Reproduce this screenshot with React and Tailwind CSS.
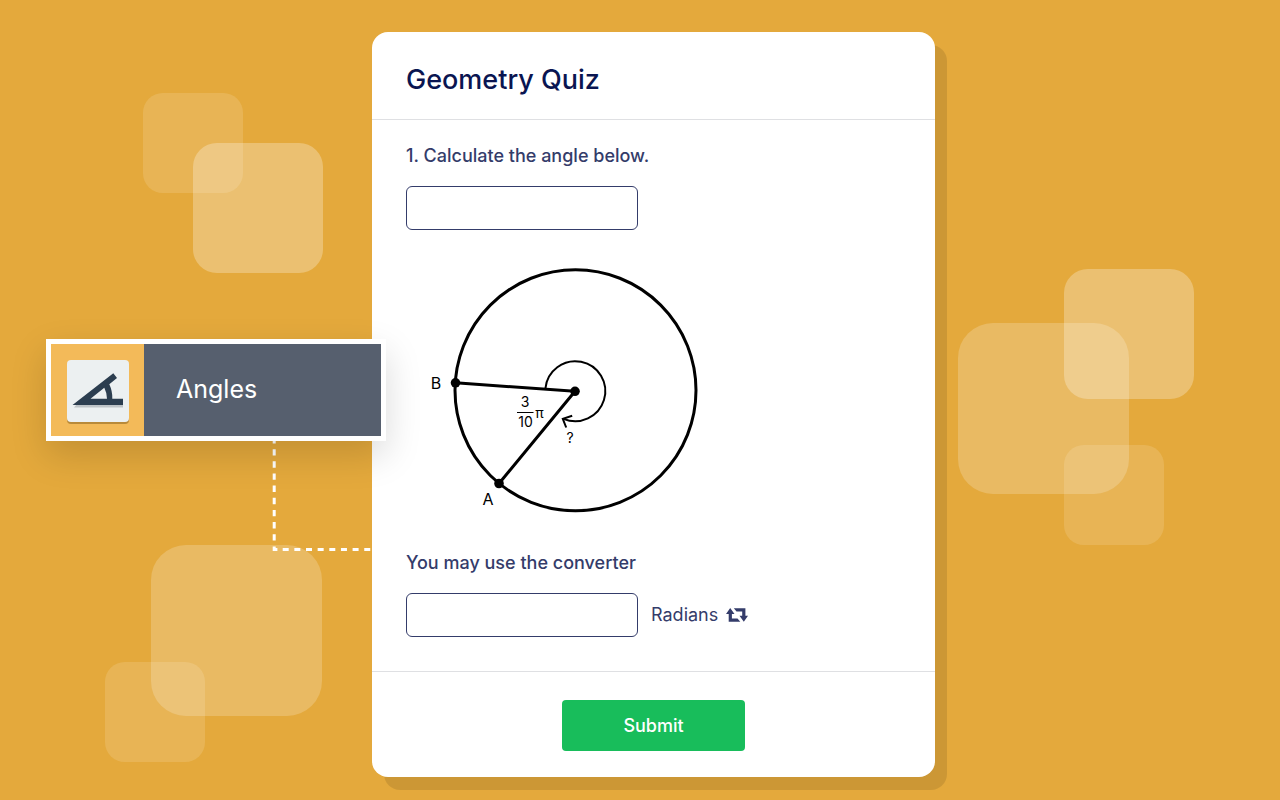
import React from "react";

const shapes = [
  "-left-[229px] top-[61px] size-[100px] rounded-[20px] bg-white/13",
  "-left-[179px] top-[111px] size-[130px] rounded-3xl bg-white/27",
  "-left-[221px] top-[513px] size-[171px] rounded-[35px] bg-white/20",
  "-left-[267px] top-[630px] size-[100px] rounded-[20px] bg-white/13",
  "left-[586px] top-[291px] size-[171px] rounded-[35px] bg-white/20",
  "left-[692px] top-[237px] size-[130px] rounded-3xl bg-white/27",
  "left-[692px] top-[413px] size-[100px] rounded-[20px] bg-white/13",
];

const Backdrop = () => (
  <div aria-hidden="true">
    {shapes.map((shape) => (
      <div key={shape} className={`absolute ${shape}`} />
    ))}
  </div>
);

// Dashed line running from the widget label down to the form
const Connector = () => (
  <svg
    className="absolute -left-[101px] top-[405px]"
    width="101"
    height="116"
    viewBox="271 437 101 116"
    fill="none"
    stroke="#fff"
    strokeWidth="3"
    aria-hidden="true"
  >
    <path d="M274.2 437V545" strokeDasharray="6.4 5.75" />
    <path d="M274.2 546.5V549.6H277.4" />
    <path d="M282.7 549.6H371" strokeDasharray="6 5.65" />
  </svg>
);

const AngleIcon = () => (
  <svg width="62" height="64" viewBox="0 0 62 64" aria-hidden="true">
    <rect y="2" width="62" height="62" rx="4" fill="#b98a3a" />
    <rect width="62" height="62" rx="4" fill="#ecf0f1" />
    <path d="M7 47.500H56V44H10Z" fill="#bdc3c7" />
    <path
      d="M5.500 45L46.300 13.300L50 18L42.300 24.300Q45.500 31 45.300 38.700H56V45ZM37.300 27.700L23.500 38.700H40Q40 33 37.300 27.700Z"
      fill="#2c3e50"
      fillRule="evenodd"
    />
  </svg>
);

const WidgetLabel = () => (
  <div className="absolute -left-[326px] top-[307px] flex h-[102px] w-[340px] border-5 border-white bg-[#565f6e] shadow-[0_14px_36px_rgba(0,0,0,0.15)]">
    <div className="flex w-[93px] items-start justify-center bg-[#f3ba59] pt-4">
      <AngleIcon />
    </div>
    <div className="flex items-center pl-8 text-[25px] text-white">Angles</div>
  </div>
);

const CircleDiagram = () => (
  <svg
    width="300"
    height="260"
    viewBox="420 260 300 260"
    className="mt-[30px] mb-[31px] ml-[14px]"
    role="img"
    aria-label="Circle with points A and B"
  >
    <g fill="none" stroke="#000">
      <circle cx="575.5" cy="390.3" r="120.5" strokeWidth="3" />
      <path d="M455.500 382.800L575 391.300L499 483.500" strokeWidth="3" />
      <path d="M545.400 388.500A30 30 0 1 1 563.500 418.800" strokeWidth="2" />
      <path d="M572.200 415.700L562.800 418.800L566.200 427.500" strokeWidth="2" />
      <path d="M517 412.500H533.500" strokeWidth="1" />
    </g>
    <circle cx="455.500" cy="382.800" r="4.800" />
    <circle cx="575" cy="391.300" r="4.800" />
    <circle cx="499" cy="483.500" r="4.800" />
    <g fontSize="16" textAnchor="middle">
      <text x="436" y="389">B</text>
      <text x="488" y="505">A</text>
    </g>
    <g fontSize="14" textAnchor="middle">
      <text x="570" y="443">?</text>
      <text x="525" y="407">3</text>
      <text x="525.5" y="427">10</text>
      <text x="539.5" y="418">π</text>
    </g>
  </svg>
);

const SwapIcon = () => (
  <svg width="22" height="14" viewBox="0 0 22 14" fill="currentColor" aria-hidden="true">
    <path d="M4.200 0L8.500 6H5.900V10.600H11.500L14.300 13.700H2.700V6H0Z" />
    <path d="M7.800 0.300H19.400V7.800H22L17.800 13.700L13.500 7.800H16.200V3.400H10.500Z" />
  </svg>
);

const inputClass =
  "h-11 w-58 rounded-md border border-[#343c6a] bg-white px-3 text-lg outline-none";

const App = () => {
  return (
    <main className="flex min-h-screen justify-center overflow-hidden bg-[#e4a93c] py-8 pl-[27px] font-['Inter',sans-serif] text-[#343c6a]">
      <div className="relative w-[563px]">
        <Backdrop />
        <form
          className="relative rounded-2xl bg-white shadow-[12px_13px_0_rgba(0,0,0,0.1)]"
          onSubmit={(e) => e.preventDefault()}
        >
          <header className="border-b border-[#dfe0e3] px-[34px] pt-[30px] pb-[21px]">
            <h1 className="text-[27px] leading-9 font-medium text-[#0a1551]">
              Geometry Quiz
            </h1>
          </header>

          <div className="border-b border-[#dfe0e3] px-[34px] pt-6 pb-[34px]">
            <label htmlFor="angle" className="mb-[18px] block text-lg leading-6 font-medium">
              1. Calculate the angle below.
            </label>
            <input id="angle" type="text" className={inputClass} />

            <CircleDiagram />

            <label htmlFor="converter" className="mb-[18px] block text-lg leading-6 font-medium">
              You may use the converter
            </label>
            <div className="flex items-center">
              <input id="converter" type="text" className={inputClass} />
              <button type="button" className="ml-[13px] flex items-center gap-2 text-lg">
                Radians
                <SwapIcon />
              </button>
            </div>
          </div>

          <div className="flex justify-center pt-7 pb-[26px]">
            <button
              type="submit"
              className="h-[51px] w-[183px] rounded-sm bg-[#18bd5b] text-lg font-medium text-white"
            >
              Submit
            </button>
          </div>
        </form>
        <Connector />
        <WidgetLabel />
      </div>
    </main>
  );
};

export default App;
